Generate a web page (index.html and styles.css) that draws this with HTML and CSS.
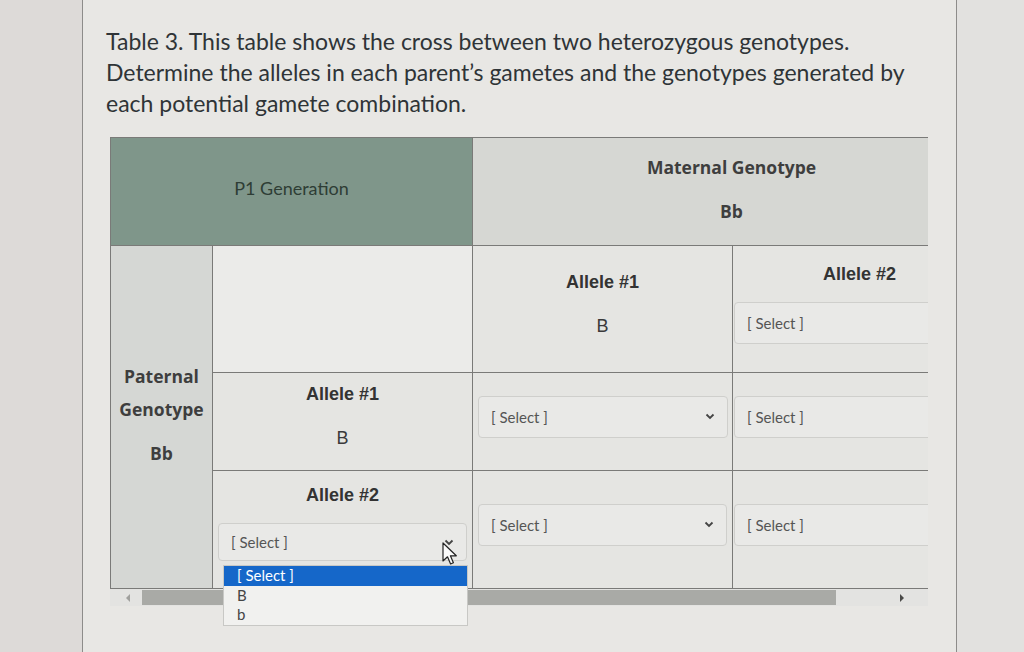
FILE: index.html
```html
<!DOCTYPE html>
<html>
<head>
<meta charset="utf-8">
<link rel="stylesheet" href="styles.css">
</head>
<body>
<div class="page">
  <div class="gutter left"></div>
  <main class="content">
    <p class="title">Table 3. This table shows the cross between two heterozygous genotypes. Determine the alleles in each parent’s gametes and the genotypes generated by each potential gamete combination.</p>
    <div class="scroller">
      <div class="clip">
        <table class="cross">
          <colgroup>
            <col class="c1"><col class="c2"><col class="c3"><col class="c4">
          </colgroup>
          <tr class="r1">
            <td colspan="2" class="p1">P1 Generation</td>
            <td colspan="2" class="maternal">
              <div class="bold">Maternal Genotype</div>
              <div class="bold para">Bb</div>
            </td>
          </tr>
          <tr class="r2">
            <td rowspan="3" class="paternal">
              <div class="bold">Paternal Genotype</div>
              <div class="bold para">Bb</div>
            </td>
            <td class="empty"></td>
            <td class="cell">
              <div class="allele">Allele #1</div>
              <div class="letter para">B</div>
            </td>
            <td class="cell edge">
              <div class="allele shift">Allele #2</div>
              <div class="select"><span>[ Select ]</span></div>
            </td>
          </tr>
          <tr class="r3">
            <td class="cell">
              <div class="allele">Allele #1</div>
              <div class="letter para">B</div>
            </td>
            <td class="cell">
              <div class="select"><span>[ Select ]</span><svg class="chev" width="10" height="7" viewBox="0 0 10 7"><path d="M1.5 1.5 L5 5 L8.5 1.5" fill="none" stroke="#444" stroke-width="1.8"/></svg></div>
            </td>
            <td class="cell edge">
              <div class="select"><span>[ Select ]</span></div>
            </td>
          </tr>
          <tr class="r4">
            <td class="cell opencell">
              <div class="allele">Allele #2</div>
              <div class="select open"><span>[ Select ]</span><svg class="chev" width="10" height="7" viewBox="0 0 10 7"><path d="M1.5 1.5 L5 5 L8.5 1.5" fill="none" stroke="#444" stroke-width="1.8"/></svg>
                <svg class="cursor" width="16" height="24" viewBox="0 0 16 24"><path d="M1 1 L1 19 L5.5 14.8 L8.6 22 L11.4 20.8 L8.4 13.8 L14.3 13.8 Z" fill="#fafafa" stroke="#222" stroke-width="1.2" stroke-linejoin="round"/></svg>
              </div>
            </td>
            <td class="cell">
              <div class="select"><span>[ Select ]</span><svg class="chev" width="10" height="7" viewBox="0 0 10 7"><path d="M1.5 1.5 L5 5 L8.5 1.5" fill="none" stroke="#444" stroke-width="1.8"/></svg></div>
            </td>
            <td class="cell edge">
              <div class="select"><span>[ Select ]</span></div>
            </td>
          </tr>
        </table>
      </div>
      <div class="hscroll">
        <svg class="arr" width="8" height="10" viewBox="0 0 8 10"><path d="M6 1 L2 5 L6 9 Z" fill="#a0a09d"/></svg>
        <div class="thumb"></div>
        <div class="rest"></div>
        <svg class="arr" width="8" height="10" viewBox="0 0 8 10"><path d="M2 1 L6 5 L2 9 Z" fill="#4a4a48"/></svg>
      </div>
      <ul class="options">
        <li class="hl">[ Select ]</li>
        <li>B</li>
        <li>b</li>
      </ul>
    </div>
  </main>
  <div class="gutter right"></div>
</div>
</body>
</html>
```

FILE: styles.css
```css
html, body {
  margin: 0;
  padding: 0;
  height: 100%;
  background: #dedbd9;
}
.page {
  display: flex;
  width: 1024px;
  height: 652px;
  overflow: hidden;
}
.gutter {
  background: #dddad8;
}
.gutter.left { width: 82px; }
.gutter.right { flex: 1; background: #e2e1df; }
.content {
  width: 875px;
  background: #e8e7e4;
  border-left: 1px solid #8d8c8a;
  border-right: 1px solid #8d8c8a;
  padding: 26px 0 0 23px;
  box-sizing: border-box;
}
.title {
  margin: 0;
  width: 822px;
  font-family: Lato, "Open Sans", sans-serif;
  font-size: 23px;
  line-height: 31px;
  color: #2f3437;
}
.scroller {
  margin: 18px 0 0 4px;
  width: 818px;
  position: relative;
}
.clip {
  width: 818px;
  overflow: hidden;
}
.cross {
  border-collapse: collapse;
  width: 880px;
  table-layout: fixed;
  font-family: Lato, sans-serif;
  color: #3a3a3a;
}
col.c1 { width: 102px; }
col.c2 { width: 260px; }
col.c3 { width: 260px; }
col.c4 { width: 258px; }
.cross td {
  border: 1px solid #7a7a78;
  padding: 0 5px 10px;
  vertical-align: middle;
  text-align: center;
  background: #e5e5e2;
}
.cross td.edge { padding-left: 1px; }
.r1 { height: 108px; }
.r2 { height: 127px; }
.r3 { height: 98px; }
.r4 { height: 118px; }
.cross td.p1 {
  background: #7f968a;
  font-size: 18px;
  color: #2e3d35;
  padding: 0 0 8px 0;
}
.cross td.maternal {
  background: #d6d7d3;
  padding: 0 0 4px;
}
.cross td.paternal {
  background: #d5d7d4;
  padding: 0 2px 4px;
}
.cross td.empty { background: #ebebe9; }
.bold {
  font-family: "Open Sans", sans-serif;
  font-weight: 700;
  font-size: 17.5px;
  line-height: 33px;
  color: #3e3e3e;
}
.para { margin-top: 11px; }
.allele {
  font-family: "Liberation Sans", Arial, sans-serif;
  font-weight: 700;
  font-size: 18px;
  line-height: 33px;
  color: #333;
}
.allele.shift {
  margin-top: -6px;
}
.letter {
  font-family: "Liberation Sans", Arial, sans-serif;
  font-size: 18px;
  line-height: 33px;
  color: #3a3a3a;
}
.select {
  position: relative;
  display: flex;
  align-items: center;
  height: 42px;
  border: 1px solid #cfcfcc;
  border-radius: 4px;
  background: #e9e9e7;
  text-align: left;
  padding: 0 12px;
  margin-top: 11px;
  font-family: Lato, sans-serif;
  font-size: 15px;
  color: #555;
  box-sizing: border-box;
}
.r3 .select { margin-top: 0; width: 250px; }
.r4 .cell .select { margin-top: 0; }
.select span { flex: 1; }
.chev { flex: none; }
.cross td.opencell {
  vertical-align: top;
  padding-top: 8px;
}
.r4 .cell .select.open { margin-top: 11px; height: 38px; }
.cursor {
  position: absolute;
  right: 8px;
  top: 18px;
}
.options {
  position: absolute;
  left: 113px;
  top: 428px;
  width: 245px;
  margin: 0;
  padding: 0;
  list-style: none;
  background: #f1f1ef;
  border: 1px solid #c8c8c5;
  box-sizing: border-box;
  z-index: 3;
  font-family: Lato, sans-serif;
}
.options li {
  height: 19.5px;
  line-height: 19.5px;
  padding-left: 13px;
  font-size: 15px;
  color: #444;
}
.options li.hl {
  background: #1567c9;
  color: #fff;
}
.hscroll {
  display: flex;
  align-items: center;
  height: 17px;
  background: #e3e3e1;
}
.arr { flex: none; margin: 0 10px 0 14px; }
.hscroll .arr:last-child { margin: 0 22px 0 62px; }
.thumb {
  width: 697px;
  height: 15px;
  background: #a9aaa6;
}
.rest { flex: 1; }
```
